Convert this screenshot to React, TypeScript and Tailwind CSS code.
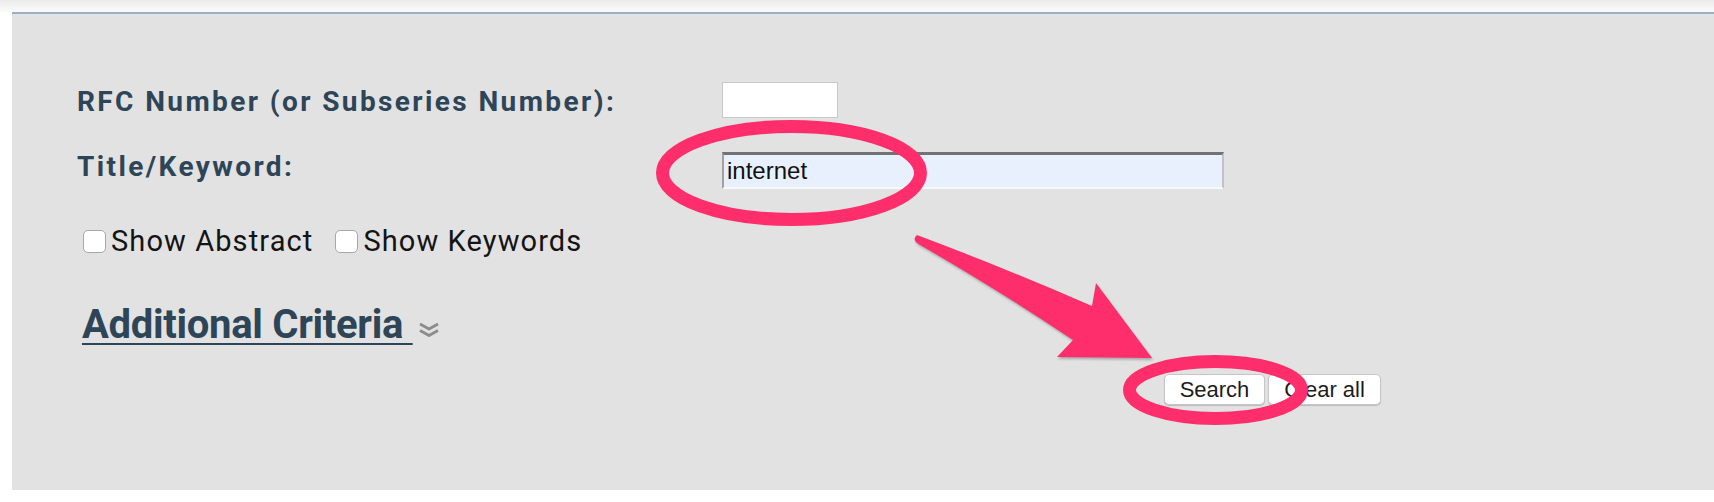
import { useState } from 'react'

const labelCls =
  "w-[645px] shrink-0 font-['Roboto',sans-serif] text-[28px] font-bold leading-[28px] tracking-[2.4px] text-[#2d4557]"

const checkCls =
  'h-[23px] w-[23px] shrink-0 appearance-none rounded-[5px] border border-[#a8a8a8] bg-white'

const optionCls = "font-['Roboto',sans-serif] text-[29px] leading-[23px] tracking-[1.1px] text-[#141414]"

const buttonCls =
  "h-[31px] rounded-[5px] border border-[#c6c6c6] bg-white font-['Liberation_Sans',Arial,sans-serif] text-[22px] leading-none text-[#1c1c1c] shadow-[0_1px_1px_rgba(0,0,0,0.18)]"

function Annotations() {
  return (
    <svg className="pointer-events-none absolute left-0 top-0" width="1714" height="502" viewBox="0 0 1714 502">
      <ellipse cx="791.5" cy="173" rx="129" ry="46.5" fill="none" stroke="#fe2d6c" strokeWidth="13" />
      <path
        d="M917 235 Q1005 268 1092 306 L1096 283 L1152 358 L1057 357 L1073 340 Q995 288 920 245 Q911 240 917 235 Z"
        fill="#fe2d6c"
        className="drop-shadow-[1px_2px_1px_rgba(0,0,0,0.25)]"
      />
      <ellipse cx="1215.5" cy="390" rx="86" ry="28.5" fill="none" stroke="#fe2d6c" strokeWidth="13" />
    </svg>
  )
}

export default function App() {
  const [rfc, setRfc] = useState('')
  const [keyword, setKeyword] = useState('internet')

  return (
    <div className="relative h-[502px] w-[1714px] overflow-hidden bg-white">
      <div className="h-[12px] bg-gradient-to-b from-[#ebebeb] to-[#fbfbfb]" />
      <div className="ml-[12px] h-[478px] border-t-2 border-[#9db0c1] bg-[#e2e2e2] pl-[65px] pt-[68px]">
        <div className="flex items-start">
          <label className={`${labelCls} mt-[6px]`}>RFC Number (or Subseries Number):</label>
          <input
            value={rfc}
            onChange={(e) => setRfc(e.target.value)}
            className="h-[36px] w-[116px] border border-[#c9c9c9] bg-white outline-none"
          />
        </div>

        <div className="mt-[34px] flex items-start">
          <label className={`${labelCls} mt-[1px]`}>Title/Keyword:</label>
          <input
            value={keyword}
            onChange={(e) => setKeyword(e.target.value)}
            className="h-[37px] w-[502px] border-t-[3px] border-r-2 border-b-2 border-l-2 border-t-[#727272] border-r-[#c2c2c2] border-b-[#f8f8f8] border-l-[#a0a0a0] bg-[#e8f0fe] pl-[3px] font-['Liberation_Sans',Arial,sans-serif] text-[24px] text-[#111] outline-none"
          />
        </div>

        <div className="mt-[41px] ml-[6px] flex items-center">
          <input type="checkbox" className={checkCls} />
          <span className={`${optionCls} ml-[5px]`}>Show Abstract</span>
          <input type="checkbox" className={`${checkCls} ml-[22px]`} />
          <span className={`${optionCls} ml-[5px]`}>Show Keywords</span>
        </div>

        <div className="mt-[52px] ml-[5px] flex items-center">
          <a className="font-['Roboto',sans-serif] text-[40px] font-bold leading-[40px] tracking-[-0.3px] text-[#2d4557] underline decoration-2 underline-offset-[5px]">
            Additional Criteria&nbsp;
          </a>
          <svg className="ml-[4px] mt-[8px]" width="24" height="17" viewBox="0 0 24 17">
            <path d="M3 3 L12 8 L21 3" fill="none" stroke="#8c8c8c" strokeWidth="2.8" strokeLinejoin="round" />
            <path d="M3 9.5 L12 14.5 L21 9.5" fill="none" stroke="#8c8c8c" strokeWidth="2.8" strokeLinejoin="round" />
          </svg>
        </div>

        <div className="mt-[29px] flex w-[1304px] justify-end gap-[3px]">
          <button className={`${buttonCls} w-[101px]`}>Search</button>
          <button className={`${buttonCls} w-[113px]`}>Clear all</button>
        </div>
      </div>
      <Annotations />
    </div>
  )
}
